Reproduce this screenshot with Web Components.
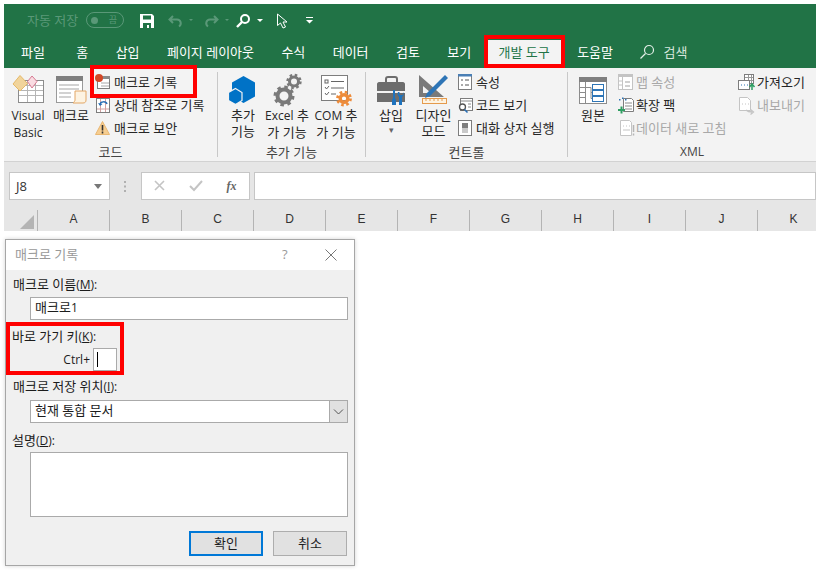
<!DOCTYPE html>
<html lang="ko"><head><meta charset="utf-8"><title>Excel</title>
<style>
html,body{margin:0;padding:0;background:#fff}
body{width:820px;height:574px;overflow:hidden;position:relative;font:13px/16px "Open Sans","Noto Sans CJK KR",sans-serif;color:#333}
.l{font-size:12px}
</style></head><body>
<excel-window>
  <excel-titlebar></excel-titlebar>
  <excel-tabs></excel-tabs>
  <excel-ribbon>
    <ribbon-group label="코드" w="213">
      <big-btn w="38" ml="5">
        <svg slot="icon" width="38" height="37" viewBox="9 71 38 37">
          <rect x="18.5" y="80.5" width="25" height="22" fill="#fff" stroke="#8c8c8c"/>
          <path d="M19 85.5h24M19 90.5h24M19 95.5h24M27.5 81v21M35.5 81v21" stroke="#b5b5b5"/>
          <path d="M13 84l7-8.5 7.5 8-7.5 7.5z" fill="#f1d49b" stroke="#e5b969"/>
          <path d="M27.5 81.5l4.5-5.5 5 5.5-5 6.5z" fill="#f9dce2" stroke="#d77a92"/>
        </svg><span class="l">Visual<br>Basic</span></big-btn>
      <big-btn w="36" ml="6">
        <svg slot="icon" width="36" height="37" viewBox="53 71 36 37">
          <rect x="56.5" y="76.5" width="26" height="26" fill="#fff" stroke="#9a9a9a"/>
          <rect x="56" y="76" width="27" height="5" fill="#7f7f7f"/>
          <path d="M59 85h20M59 89h20M59 93h12M59 97h12" stroke="#a5a5a5"/>
          <path d="M75 91h11v9c0 2-1 3-3 3h-10c1-1 2-2 2-3z" fill="#fdf3e2" stroke="#e3a664"/>
        </svg>매크로</big-btn>
      <div class="col" style="margin-left:6px">
        <small-row><svg slot="icon" width="19" height="23" viewBox="95 71 19 23">
          <rect x="97.5" y="76.5" width="12" height="12" fill="#fff" stroke="#7d7d7d"/>
          <rect x="97" y="76" width="13" height="3" fill="#8a8a8a"/>
          <path d="M101 83h8M101 86h8" stroke="#a8a8a8"/>
          <circle cx="99" cy="78" r="4" fill="#d24726"/></svg>매크로 기록</small-row>
        <small-row><svg slot="icon" width="19" height="23" viewBox="95 94 19 23">
          <rect x="96.5" y="98.5" width="13" height="14" fill="#fff" stroke="#7d7d7d"/>
          <path d="M97 109h12M100.500 99v13M105.500 99v13" stroke="#d3a0a0"/>
          <path d="M100 105c0-4 6-4 7-1" fill="none" stroke="#2a6fb5" stroke-width="1.500"/>
          <path d="M98 103l2 3 2.500-2z" fill="#2a6fb5"/></svg>상대 참조로 기록</small-row>
        <small-row><svg slot="icon" width="19" height="23" viewBox="95 117 19 23">
          <path d="M102.500 121.500l7 13h-14z" fill="#f6cd90" stroke="#e9b772" stroke-linejoin="round"/>
          <path d="M102.500 125v5.500M102.500 131.500v2" stroke="#333" stroke-width="1.600"/></svg>매크로 보안</small-row>
      </div>
    </ribbon-group>
    <ribbon-sep></ribbon-sep>
    <ribbon-group label="추가 기능" w="147">
      <big-btn w="30" ml="10">
        <svg slot="icon" width="30" height="37" viewBox="228 71 30 37">
          <path d="M243.500 76l11.500 6.500v14L243.500 103 232 96.500v-14z" fill="#0072c6"/>
          <path d="M235.500 88.500l6.500 4v8l-6.500 4-7-4v-8z" fill="#0072c6" stroke="#f3f3f3" stroke-width="1.200"/>
        </svg>추가<br>기능</big-btn>
      <big-btn w="44" ml="7">
        <svg slot="icon" width="44" height="37" viewBox="265 71 44 37">
          <circle cx="284" cy="96" r="6.500" fill="none" stroke="#7a7a7a" stroke-width="4"/>
          <circle cx="284" cy="96" r="9" fill="none" stroke="#7a7a7a" stroke-width="3" stroke-dasharray="3.500 3.570"/>
          <circle cx="294" cy="81.500" r="4.500" fill="none" stroke="#7a7a7a" stroke-width="3"/>
          <circle cx="294" cy="81.500" r="6.500" fill="none" stroke="#7a7a7a" stroke-width="2.400" stroke-dasharray="2.550 2.550"/>
        </svg><span class="l">Excel</span> 추<br>가 기능</big-btn>
      <big-btn w="44" ml="5">
        <svg slot="icon" width="44" height="37" viewBox="314 71 44 37">
          <rect x="321.500" y="75.500" width="26" height="25" fill="#fff" stroke="#7d7d7d"/>
          <rect x="325" y="80" width="3" height="3" fill="none" stroke="#666"/>
          <path d="M331 81.500h13M331 88h13M331 94h5M325 87l1.500 2 2.500-3M325 93l1.500 2 2.500-3" fill="none" stroke="#666"/>
          <circle cx="344" cy="98.500" r="3.800" fill="none" stroke="#ed8b3a" stroke-width="3.400"/>
          <circle cx="344" cy="98.500" r="6.500" fill="none" stroke="#ed8b3a" stroke-width="2.800" stroke-dasharray="2.550 2.550"/>
        </svg><span class="l">COM</span> 추<br>가 기능</big-btn>
    </ribbon-group>
    <ribbon-sep></ribbon-sep>
    <ribbon-group label="컨트롤" w="201">
      <big-btn w="30" ml="10">
        <svg slot="icon" width="32" height="37" viewBox="376 71 32 37" style="margin-right:-2px">
          <path d="M386 82v-3c0-1 1-2 2-2h7c1 0 2 1 2 2v3" fill="none" stroke="#6d6d6d" stroke-width="2"/>
          <path d="M377 84c0-1 1-2 2-2h24c1 0 2 1 2 2v7h-28z" fill="#6d6d6d"/>
          <path d="M377 93h28v9h-28z" fill="#6d6d6d"/>
          <path d="M398 92c-1 2 0 4 1 5v8h3v-8c2-1 2-3 1-5v3h-1.500v0h-2v-3z" fill="#1e73be"/>
          <path d="M393 90h2v8l1 2v5h-4v-5l1-2z" fill="#1e73be"/>
        </svg>삽입<span class="drop">▾</span></big-btn>
      <big-btn w="37" ml="9">
        <svg slot="icon" width="37" height="37" viewBox="415 71 37 37">
          <path fill-rule="evenodd" d="M419 75l25 22h-25zM423 86v7h8z" fill="#7a7a7a"/>
          <path d="M445 75l3 3-18 18-5 2 2-5z" fill="#2e75b6"/>
          <rect x="422.500" y="98.500" width="24" height="5" fill="#fdf3e2" stroke="#e59a4c"/>
          <path d="M426 99v2M430 99v2M434 99v2M438 99v2M442 99v2" stroke="#e59a4c"/>
        </svg>디자인<br>모드</big-btn>
      <div class="col" style="margin-left:6px">
        <small-row><svg slot="icon" width="18" height="23" viewBox="458 71 18 23">
          <rect x="458.500" y="74.500" width="13" height="15" fill="#fff" stroke="#7d7d7d"/>
          <rect x="458" y="74" width="14" height="2.500" fill="#4a7fb5"/>
          <path d="M461 80h2M461 85h2M465 80h4M465 85h4" stroke="#555"/></svg>속성</small-row>
        <small-row><svg slot="icon" width="18" height="23" viewBox="458 94 18 23">
          <rect x="460.500" y="98.500" width="12" height="12" fill="#fff" stroke="#7d7d7d"/>
          <path d="M461 101h11M468 104h3M468 107h3" stroke="#8a8a8a"/>
          <circle cx="462.500" cy="107" r="3" fill="#fff" stroke="#555" stroke-width="1.300"/>
          <path d="M464.500 109.500l3 3" stroke="#2a6fb5" stroke-width="1.600"/></svg>코드 보기</small-row>
        <small-row><svg slot="icon" width="18" height="23" viewBox="458 117 18 23">
          <rect x="458.500" y="120.500" width="13" height="15" fill="#fff" stroke="#7d7d7d"/>
          <rect x="462" y="123" width="6" height="5" fill="#7f7f7f"/>
          <rect x="462" y="128" width="6" height="5" fill="#c9c9c9"/></svg>대화 상자 실행</small-row>
      </div>
    </ribbon-group>
    <ribbon-sep></ribbon-sep>
    <ribbon-group label="XML" lat w="248">
      <big-btn w="30" ml="10">
        <svg slot="icon" width="30" height="37" viewBox="578 71 30 37">
          <rect x="579.500" y="77.500" width="27" height="26" fill="#fff" stroke="#8c8c8c"/>
          <rect x="579" y="77" width="28" height="5" fill="#7f7f7f"/>
          <path d="M585.500 82v21M580 87.500h5M580 92.500h5M580 97.500h5M586 87.500h5M591 87.500v11M591 92.500h1M591 98.500h1" stroke="#8c8c8c" fill="none"/>
          <rect x="592.500" y="84.500" width="11" height="5" fill="#fff" stroke="#2e75b6"/>
          <rect x="592.500" y="90.500" width="11" height="5" fill="#fff" stroke="#2e75b6"/>
          <rect x="592.500" y="96.500" width="11" height="5" fill="#fff" stroke="#2e75b6"/>
        </svg>원본</big-btn>
      <div class="col" style="margin-left:10px;width:120px">
        <small-row off><svg slot="icon" width="18" height="23" viewBox="618 71 18 23">
          <rect x="618.500" y="74.500" width="14" height="15" fill="#fff" stroke="#c4c4c4"/>
          <rect x="618" y="74" width="15" height="3" fill="#c4c4c4"/>
          <path d="M622.500 77v12M619 81h3M619 85h3" stroke="#c4c4c4"/>
          <path d="M625 81h5v2h-5zM625 85h5v2h-5z" fill="#d0d0d0"/></svg>맵 속성</small-row>
        <small-row><svg slot="icon" width="18" height="23" viewBox="618 94 18 23">
          <path d="M623.500 98.500h8l2 2v11h-10z" fill="#fff" stroke="#7d7d7d"/>
          <path d="M625 103h7M625 106h7M625 109h7" stroke="#8a8a8a"/>
          <path d="M619 99h1.500v1.500H619zM622 97.500h1.500V99H622zM625 99h1.500v1.500H625z" fill="#2e75b6"/>
          <path d="M618 110h7M621.500 106.500v7" stroke="#2f9e62" stroke-width="2"/></svg>확장 팩</small-row>
        <small-row off><svg slot="icon" width="18" height="23" viewBox="618 117 18 23">
          <path d="M620.500 120.500h9l2 2v13h-11z" fill="#fff" stroke="#c4c4c4"/>
          <path d="M623 126h1M626 126h1M629 126h1M623 130h7" stroke="#c4c4c4"/>
          <path d="M633.500 125v7M633.500 133.500v2" stroke="#b5b5b5" stroke-width="1.500"/></svg>데이터 새로 고침</small-row>
      </div>
      <div class="col">
        <small-row><svg slot="icon" width="19" height="23" viewBox="738 71 19 23">
          <rect x="744.500" y="74.500" width="9" height="9" fill="#fff" stroke="#7d7d7d"/>
          <path d="M745 77.500h8M745 80.500h8M748.500 75v8M751.500 75v8" stroke="#999"/>
          <rect x="738.500" y="80.500" width="11" height="9" fill="#fff" stroke="#7d7d7d"/>
          <path d="M741 85h1M744 85h1M747 85h1" stroke="#2e75b6"/>
          <path d="M752 90v-5M749.500 87l2.500-3 2.500 3" fill="none" stroke="#2f9e62" stroke-width="1.500"/></svg>가져오기</small-row>
        <small-row off><svg slot="icon" width="19" height="23" viewBox="738 94 19 23">
          <path d="M739.500 97.500h8l3 3v10h-11z" fill="#fff" stroke="#c4c4c4"/>
          <path d="M742 104h1M745 104h1M748 104h1" stroke="#c4c4c4"/>
          <path d="M746 110c2 2 4 2 6 2M750.500 109.500l3 2.500-3 2.500" fill="none" stroke="#c4c4c4" stroke-width="1.300"/></svg>내보내기</small-row>
      </div>
    </ribbon-group>
  </excel-ribbon>
  <formula-bar></formula-bar>
  <column-headers></column-headers>
</excel-window>
<record-dialog></record-dialog>
<red-mark style="left:484px;top:35px;width:81px;height:33px"></red-mark>
<red-mark style="left:90px;top:65px;width:107px;height:33px"></red-mark>
<red-mark style="left:6px;top:322px;width:118px;height:53px"></red-mark>
<script>
function el(name,html,init){
  customElements.define(name,class extends HTMLElement{
    constructor(){super();this.attachShadow({mode:"open"}).innerHTML=html}
    connectedCallback(){if(init)init(this)}
  });
}
el("excel-window",`<style>:host{display:block;margin:4px 4px 0;width:812px;height:227px;overflow:hidden;background:#e6e6e6}</style><slot></slot>`);
el("excel-titlebar",`<style>
:host{display:flex;align-items:center;height:32px;background:#217346;padding-left:23px;color:#5a9878}
.t{width:51px;white-space:nowrap}
.tg{display:flex;align-items:center;justify-content:space-between;box-sizing:border-box;width:38px;height:16px;margin-left:8px;margin-right:12px;border:1px solid #5a9878;border-radius:8px;padding:0 6px 0 4px;font-size:9px}
.tg i{display:block;width:7px;height:7px;border-radius:50%;background:#5a9878}
svg{display:block}
</style><span class="t">자동 저장</span><span class="tg"><i></i>끔</span>
<svg width="184" height="32" viewBox="136 4 184 32">
<path d="M140 14h12l2 2v12h-14z" fill="#fff"/><rect x="143" y="15.500" width="8" height="4" fill="#217346"/><rect x="143" y="23" width="8" height="5" fill="#217346"/><rect x="147" y="25" width="2" height="3" fill="#fff"/>
<path d="M173 16l-3.500 3.500 3.500 3.500M170 19.500h7c4 0 5 5 2 7" fill="none" stroke="#5a9878" stroke-width="2"/><path d="M189 19l2 2 2-2z" fill="#5a9878"/>
<path d="M214 16l3.500 3.500-3.500 3.500M217 19.500h-7c-4 0-5 5-2 7" fill="none" stroke="#5a9878" stroke-width="2"/><path d="M225 19l2 2 2-2z" fill="#5a9878"/>
<circle cx="245" cy="19" r="4" fill="none" stroke="#fff" stroke-width="2"/><path d="M242 22l-5 5" stroke="#fff" stroke-width="2.400"/><path d="M257 19h6l-3 3z" fill="#fff"/>
<path d="M277.500 14v11.500l3-2.500 2.500 5 2.500-1-2.500-5h4z" fill="#217346" stroke="#fff"/>
<path d="M306 17.500h7" stroke="#fff"/><path d="M306 20h7l-3.500 3.500z" fill="#fff"/>
</svg>`);
el("excel-tabs",`<style>
:host{display:flex;height:32px;background:#217346;color:#fff;padding-left:3.300px;white-space:nowrap}
span{display:block;padding:0 13.700px;line-height:32px}
.a{background:#f3f3f3;color:#217346;margin-top:4px;line-height:24px;height:28px}
.s{display:flex;align-items:center;gap:8px;color:#d6e6dc}
svg{display:block}
</style><span>파일</span><span style="margin-left:4px">홈</span><span>삽입</span><span>페이지 레이아웃</span><span>수식</span><span>데이터</span><span>검토</span><span>보기</span><span class="a">개발 도구</span><span>도움말</span>
<span class="s"><svg width="15" height="16" viewBox="0 0 15 16"><circle cx="9" cy="6" r="4.500" fill="none" stroke="#e4efe8" stroke-width="1.200"/><path d="M5.500 9.500l-5 5" stroke="#e4efe8" stroke-width="1.200"/></svg>검색</span>`);
el("excel-ribbon",`<style>:host{display:flex;height:93px;background:#f3f3f3;border-bottom:1px solid #d2d2d2;color:#262626}</style><slot></slot>`);
el("ribbon-sep",`<style>:host{display:block;width:1px;background:#c8c8c8;margin:4px 0 4px}</style>`);
el("ribbon-group",`<style>
:host{display:flex;flex-direction:column;box-sizing:border-box;flex:none}
.c{flex:1;display:flex;padding-top:3px}
.l{height:18px;line-height:18px;text-align:center;color:#444}
:host([lat]) .l{font-size:12px}
::slotted(.col){display:flex;flex-direction:column;flex:none}
</style><div class="c"><slot></slot></div><div class="l"></div>`,h=>{
  h.style.width=h.getAttribute("w")+"px";
  h.shadowRoot.querySelector(".l").textContent=h.getAttribute("label");
});
el("big-btn",`<style>
:host{display:block;flex:none;text-align:center;white-space:nowrap;line-height:16px}
.i{height:36px}
::slotted(svg){display:block}
::slotted(.drop){display:block;font-size:9px;line-height:14px;color:#666}
</style><div class="i"><slot name="icon"></slot></div><slot></slot>`,h=>{
  h.style.width=h.getAttribute("w")+"px";
  h.style.marginLeft=(h.getAttribute("ml")||0)+"px";
});
el("small-row",`<style>
:host{display:flex;align-items:center;box-sizing:border-box;height:23px;padding-bottom:2px;white-space:nowrap}
:host([off]){color:#a8a8a8}
::slotted(svg){display:block;flex:none;align-self:flex-start}
</style><slot name="icon"></slot><slot></slot>`);
el("formula-bar",`<style>
:host{display:flex;align-items:center;box-sizing:border-box;height:46px;padding:10px 0 8px 5px;background:#e6e6e6}
.b{box-sizing:border-box;height:28px;background:#fff;border:1px solid #c6c6c6;display:flex;align-items:center}
.n{width:101px;padding:0 7px 0 6px;justify-content:space-between;font-size:13px;color:#333}
.n i{width:0;height:0;border:4px solid transparent;border-top:5px solid #777;border-bottom:0}
svg{display:block}
.d{width:31px;display:flex;justify-content:center}
.f{width:109px;margin-right:4px}
.x{flex:1}
</style><div class="b n"><span>J8</span><i></i></div>
<div class="d"><svg width="3" height="11" viewBox="0 0 3 11"><path d="M0 0h2v2H0zM0 4.500h2v2H0zM0 9h2v2H0z" fill="#b0b0b0"/></svg></div>
<div class="b f"><svg width="107" height="26" viewBox="142 173 107 26">
<path d="M155 181l9 9M164 181l-9 9" stroke="#c4c4c4" stroke-width="1.600"/>
<path d="M190 186l4 4 8-9" fill="none" stroke="#c4c4c4" stroke-width="2"/>
<text x="226.500" y="190" font-family="Liberation Serif" font-style="italic" font-weight="700" font-size="12" fill="#666">fx</text></svg></div>
<div class="b x"></div>`);
el("column-headers",`<style>
:host{display:flex;height:23px;background:#e6e6e6;overflow:hidden;color:#333}
.k{flex:none;width:34px;border-right:1px solid #b4b4b4;margin-top:2px;box-sizing:border-box}
.k svg{display:block;margin:5px 0 0 16px}
span{flex:none;box-sizing:border-box;width:72px;border-right:1px solid #b4b4b4;text-align:center;margin-top:2px;font:12px/19px "Liberation Sans",sans-serif}
</style><div class="k"><svg width="14" height="14" viewBox="0 0 14 14"><path d="M14 0v14H0z" fill="#b4b4b4"/></svg></div><span>A</span><span>B</span><span>C</span><span>D</span><span>E</span><span>F</span><span>G</span><span>H</span><span>I</span><span>J</span><span>K</span>`);
el("record-dialog",`<style>
:host{display:block;box-sizing:border-box;margin:8px 0 0 5px;width:350px;height:327px;background:#f0f0f0;border:1px solid #a6a6a6;box-shadow:0 0 4px rgba(0,0,0,.18);color:#1c1c1c;font-size:13px}
.l{font-size:12px}
.h{display:flex;align-items:center;height:30px;background:#fff;padding:0 0 2px 9px;box-sizing:border-box;color:#999}
.h b{flex:1;font-weight:400}
.h svg{display:block;margin-bottom:-2px}
.b{padding:6px 6px 0 7px}
.lb{height:18px;line-height:16px}
.in{box-sizing:border-box;margin-left:17px;width:318px;background:#fff;border:1px solid #aaa;height:23px;line-height:19px;padding-left:4px}
.key{display:flex;align-items:center;justify-content:flex-end;width:104px;height:23px;margin-top:2px;gap:3px}
.key div{box-sizing:border-box;width:24px;height:23px;background:#fff;border:1px solid #aaa;padding:3px 0 0 3px}
.key i{display:block;width:1px;height:15px;background:#000}
.cb{display:flex;justify-content:space-between;padding:0}
.cb span{padding-left:4px}
.cb i{display:flex;align-items:center;justify-content:center;width:17px;background:#e1e1e1;border-left:1px solid #aaa}
.bt{display:flex;justify-content:flex-end;gap:10px;margin:14px 1px 0 0}
.bt div{box-sizing:border-box;width:74px;height:25px;background:#e1e1e1;border:1px solid #adadad;text-align:center;line-height:23px}
.bt .d{border:2px solid #0078d7;line-height:21px}
</style>
<div class="h"><b>매크로 기록</b>
<svg width="72" height="30" viewBox="282 240 72 30"><text x="282" y="259" font-size="13" font-family="Open Sans" fill="#999">?</text><path d="M325.500 249.500l11 11M336.500 249.500l-11 11" stroke="#777"/></svg></div>
<div class="b">
<div class="lb">매크로 이름<span class="l">(<u>M</u>):</span></div>
<div class="in" style="margin-top:3px">매크로<span class="l">1</span></div>
<div class="lb" style="margin-top:8px;margin-left:-1px">바로 가기 키<span class="l">(<u>K</u>):</span></div>
<div class="key"><span class="l">Ctrl+</span><div><i></i></div></div>
<div class="lb" style="margin-top:7px">매크로 저장 위치<span class="l">(<u>I</u>):</span></div>
<div class="in cb" style="margin-top:4px"><span>현재 통합 문서</span><i><svg width="11" height="6" viewBox="0 0 11 6"><path d="M1 .5l4.500 4.500L10 .5" fill="none" stroke="#555"/></svg></i></div>
<div class="lb" style="margin-top:9px;margin-left:-1px">설명<span class="l">(<u>D</u>):</span></div>
<div class="in" style="margin-top:2px;height:65px"></div>
<div class="bt"><div class="d">확인</div><div>취소</div></div>
</div>`);
el("red-mark",`<style>:host{display:block;position:absolute;box-sizing:border-box;border:4px solid #f00}</style>`);
</script>
</body></html>
